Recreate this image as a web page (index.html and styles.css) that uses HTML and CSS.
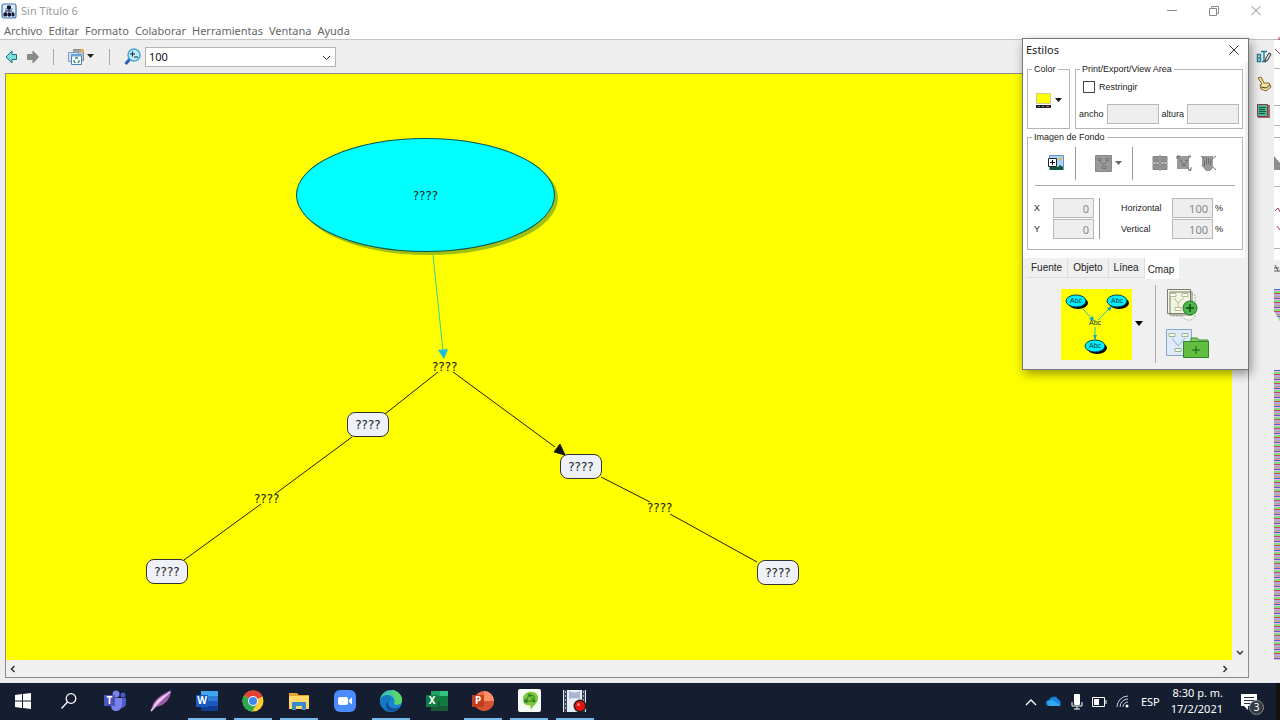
FILE: index.html
```html
<!DOCTYPE html>
<html lang="es">
<head>
    <meta charset="UTF-8">
    <meta name="viewport" content="width=device-width, initial-scale=1.0">
    <title>Sin Título 6</title>
    <link rel="stylesheet" href="styles.css">
</head>
<body>
  <div class="desktop">
    <div class="app">
      <header class="titlebar">
        <svg class="app-icon" width="16" height="16" viewBox="0 0 16 16">
          <rect x="1" y="1" width="14" height="14" rx="2" fill="#dfeaf6" stroke="#3b78b8" stroke-width="1.2"/>
          <path d="M6.500 3h3v3h-3zM3 10h2.500v3H3zM7 10h2.500v3H7zM11 10h2v3h-2zM8 6v3M5 9l-1 2M11 9l1 2M4 8h7" fill="#111a33" stroke="#111a33"/>
          <path d="M4 6h2M11 5v2M7 8h1" stroke="#5f94c9"/>
        </svg>
        <span class="title">Sin Título 6</span>
        <div class="window-buttons">
          <button aria-label="Minimizar"><svg width="12" height="12"><path d="M1 5.500h10"/></svg></button>
          <button aria-label="Restaurar"><svg width="12" height="12"><path d="M1.500 3.500h7v7h-7zM3.500 3v-1.500h7v7H9"/></svg></button>
          <button aria-label="Cerrar"><svg width="12" height="12"><path d="M1.500 1l9 9M10.500 1l-9 9"/></svg></button>
        </div>
      </header>

      <nav class="menu">
        <button>Archivo</button>
        <button>Editar</button>
        <button>Formato</button>
        <button>Colaborar</button>
        <button>Herramientas</button>
        <button>Ventana</button>
        <button>Ayuda</button>
      </nav>

      <div class="workspace">
        <main class="main">
          <div class="toolbar">
            <button aria-label="Atrás"><svg width="12" height="14" viewBox="0 0 12 14"><path d="M1 7l6-6v3.500h4.500v5H7V13z" fill="#7fe0dc" stroke="#1c6a88"/></svg></button>
            <button class="forward" aria-label="Adelante"><svg width="12" height="14" viewBox="0 0 12 14"><path d="M11.500 7L6 1v3.500H.5v5H6V13z" fill="#8d8d8d" stroke="#858585"/></svg></button>
            <span class="bar"></span>
            <button class="views" aria-label="Vistas">
              <svg width="18" height="18" viewBox="0 0 18 18">
                <path d="M6.500 1.500h10v11h-10z" fill="#c9c9c9" stroke="#8b8b8b"/><path d="M6.500 2h10v2.500h-10z" fill="#a5a5a5"/><path d="M14 1h3v3h-3z" fill="#f4b04d"/>
                <path d="M1.500 4.500h10v9h-10z" fill="#d6e2f0" stroke="#7f9dc0"/>
                <path d="M4.500 6.500h10v10h-10z" fill="#fff" stroke="#4a80c4"/><path d="M4 6h11v2.500H4z" fill="#6aa0dd"/>
                <path d="M8 10.500l1.500-1 1.500 1M7 12l0 2 1.500 1M12 12v2l-1.500 1" stroke="#23806a" fill="none" stroke-width="1.200"/>
              </svg>
              <svg width="8" height="5"><path d="M0 0h7L3.500 4z" fill="#222"/></svg>
            </button>
            <span class="bar"></span>
            <label class="zoom-icon" for="zoom" aria-label="Zoom">
              <svg width="18" height="18" viewBox="0 0 18 18">
                <path d="M6 11l-4.500 5" stroke="#2f5bb0" stroke-width="3"/>
                <circle cx="10" cy="7" r="6" fill="#b8ecf7" stroke="#4aa3d5" stroke-width="1.500"/>
                <path d="M8.500 3.500v5M6 6h5M10 9h4" stroke="#124" fill="none"/>
              </svg>
            </label>
            <div class="zoom-select">
              <select id="zoom"><option>100</option><option>75</option><option>50</option></select>
              <svg width="9" height="6"><path d="M1 1l3.500 3.500L8 1" fill="none" stroke="#333"/></svg>
            </div>
          </div>

          <div class="frame">
            <div class="map">
              <svg class="links" width="900" height="560">
                <path d="M427 181l10 96" class="cyan"/>
                <path d="M432 276l10-1-4 10z" fill="#17c0e0"/>
                <path d="M432 298L379 340M346 363L269 420M255 430L178 486M447 298L549 373M595 403L644 428M664 440L751 488"/>
                <path d="M559 381l-11-3 6-8z" class="head"/>
              </svg>
              <div class="ellipse">????</div>
              <div class="node n1">????</div>
              <div class="node n2">????</div>
              <div class="node n3">????</div>
              <div class="node n4">????</div>
              <span class="phrase p1">????</span>
              <span class="phrase p2">????</span>
              <span class="phrase p3">????</span>
            </div>
            <div class="scroll-v"><svg width="8" height="6"><path d="M1 1l3 3 3-3"/></svg></div>
            <div class="scroll-h">
              <svg width="6" height="8"><path d="M4.500 1l-3 3 3 3"/></svg>
              <svg width="6" height="8"><path d="M1.500 1l3 3-3 3"/></svg>
            </div>
          </div>
        </main>

        <aside class="side">
          <button aria-label="Texto">
            <svg width="16" height="14" viewBox="0 0 16 14"><path d="M1.500 4.500h3v7h-3zM1 8h4M5 1.500h6M8 2v9M6 11.500h4" fill="none" stroke="#1f8292" stroke-width="1.500"/><path d="M9 12l1-4 3-5 2 1-3 6z" fill="#ddd" stroke="#333"/></svg>
          </button>
          <button aria-label="Estilo">
            <svg width="16" height="16" viewBox="0 0 16 16"><path d="M2 2l3-1 3 6 5 0 2 4-5 4-5-2-1-4 2-1z" fill="#f4e1a0" stroke="#876326"/><path d="M5 11l5 1 4-3" fill="none" stroke="#443"/></svg>
          </button>
          <button aria-label="Notas">
            <svg width="15" height="15" viewBox="0 0 15 15"><path d="M2 1h12v13H2z" fill="#9a6a70"/><path d="M1.500.5h10v12h-10z" fill="#4fb890" stroke="#823d4c"/><path d="M3 3.500h7M3 5.500h6M3 7.500h7M3 9.500h6" stroke="#12543f"/></svg>
          </button>
        </aside>
      </div>
    </div>

    <!-- edge of the window behind -->
    <div class="behind">
      <div class="behind-top">
        <svg width="6" height="260">
          <path d="M0 39.500h6M0 68.500h6M0 105.500h6M0 125.500h6M0 137.500h6M0 186.500h6M0 248.500h6" stroke="#b5b5b5"/>
          <path d="M1 49l5 5M1 211l3-3 2 4M3 226l3 4M5 37v3" stroke="#a33c55" fill="none"/>
          <path d="M0 156l6 7v7H0z" fill="#8d8d8d"/>
        </svg>
      </div>
      <div class="behind-tab"><svg width="6" height="16"><path d="M0 8h5M1 5l3 6M0 11h6" stroke="#555"/></svg></div>
      <div class="stripes short"></div>
      <div class="stripes"></div>
    </div>

    <section class="palette">
      <div class="palette-title">
        <span>Estilos</span>
        <button aria-label="Cerrar"><svg width="10" height="10"><path d="M.5.5l9 9M9.500.5l-9 9"/></svg></button>
      </div>
      <div class="panel">
        <div class="group-row">
          <fieldset class="color">
            <legend>Color</legend>
            <button aria-label="Color de fondo">
              <svg width="17" height="17"><path d="M1.500 1.500h14v10h-14z" fill="#ff0" stroke="#c8c8a0"/><path d="M1 13h15v3H1z" fill="#222"/><path d="M3 14.500h2" stroke="#57c"/><path d="M7 14.500h2" stroke="#3a6"/><path d="M11 14.500h3" stroke="#c55"/></svg>
              <svg width="7" height="5"><path d="M0 0h7L3.500 4z" fill="#111"/></svg>
            </button>
          </fieldset>
          <fieldset class="area">
            <legend>Print/Export/View Area</legend>
            <label class="check"><input type="checkbox">Restringir</label>
            <div class="sizes">
              <label for="ancho">ancho</label><input id="ancho" type="text" disabled>
              <label for="altura">altura</label><input id="altura" type="text" disabled>
            </div>
          </fieldset>
        </div>
        <fieldset class="image">
          <legend>Imagen de Fondo</legend>
          <div class="tools">
            <button aria-label="Agregar imagen">
              <svg width="18" height="16"><path d="M2.500.5h14v14h-14z" fill="#a9d4f5" stroke="#6a93c4"/><path d="M3 12h8l2-2 3 2v3H3z" fill="#0d5a3f"/><circle cx="13" cy="4" r="1.500" fill="#f3b92f"/><path d="M1.500 3.500h8v8h-8z" fill="#fff" stroke="#1c2733"/><path d="M5.500 5v5M3 7.500h5" stroke="#111"/></svg>
            </button>
            <span class="bar"></span>
            <button class="styles" aria-label="Posición" disabled>
              <svg width="17" height="17"><path d="M.5.5h16v16H.5z" fill="#999" stroke="#888"/><path d="M3 3.500h3v2H3zM11 3.500h3v2h-3zM7 11.500h4v2H7zM5 6l3.500 4L12 6" fill="none" stroke="#777"/></svg>
              <svg width="7" height="5"><path d="M0 0h7L3.500 4z" fill="#666"/></svg>
            </button>
            <span class="bar"></span>
            <button aria-label="Centrar" disabled>
              <svg width="16" height="16"><path d="M1 1.500h6v5H1zM9 1.500h6v5H9zM1 9.500h6v5H1zM9 9.500h6v5H9z" fill="#909090" stroke="#858585"/><path d="M8 0v16M0 8h16" stroke="#666"/></svg>
            </button>
            <button aria-label="Ajustar" disabled>
              <svg width="16" height="16"><path d="M1 1h12v13H1z" fill="#999"/><path d="M1 1l3 3M15 1l-3 3M11 12l4 4M1 4V1h3M12 1h3M15 12v3h-3M4 5.500h2M9 5.500h3M6 10.500h4M5 7l3 3 3-3" fill="none" stroke="#707070"/></svg>
            </button>
            <button aria-label="Mover" disabled>
              <svg width="17" height="16"><path d="M2 1h11v12l-3 3H6l-5-6h1z" fill="#999"/><path d="M4.500 11V5M6.500 9V3M8.500 9V3M10.500 10V4M12 4l4-3M13 12l3 3M1 1l3 3" fill="none" stroke="#707070"/></svg>
            </button>
          </div>
          <hr>
          <div class="position">
            <div class="xy">
              <label for="x">X</label><input id="x" type="text" value="0" disabled>
              <label for="y">Y</label><input id="y" type="text" value="0" disabled>
            </div>
            <div class="scale">
              <label for="hor">Horizontal</label><input id="hor" type="text" value="100" disabled><span>%</span>
              <label for="ver">Vertical</label><input id="ver" type="text" value="100" disabled><span>%</span>
            </div>
          </div>
        </fieldset>
      </div>
      <div class="tabs">
        <button>Fuente</button><button>Objeto</button><button>Línea</button><button class="active">Cmap</button>
      </div>
      <div class="presets">
        <button class="preview" aria-label="Estilo de Cmap">
          <svg width="71" height="71" viewBox="0 0 71 71">
            <path d="M0 0h71v71H0z" fill="#ff0"/>
            <path d="M22 20l10 11M37 31l12-12M34 38v12" stroke="#24bfae"/>
            <path d="M33 32l-5-2 4-3zM51 17l-5 2 3 3zM34 51l-2-5h4z" fill="#14a9bd"/>
            <g fill="#000"><ellipse cx="17" cy="14" rx="10" ry="6"/><ellipse cx="58" cy="14" rx="10" ry="6"/><ellipse cx="36" cy="59" rx="10" ry="6"/></g>
            <g fill="#00efff" stroke="#045"><ellipse cx="15" cy="12" rx="10" ry="6"/><ellipse cx="56" cy="12" rx="10" ry="6"/><ellipse cx="34" cy="57" rx="10" ry="6"/></g>
            <g class="abc"><text x="15" y="14">Abc</text><text x="56" y="14">Abc</text><text x="34" y="36">Abc</text><text x="34" y="59">Abc</text></g>
          </svg>
        </button>
        <svg class="caret" width="8" height="6"><path d="M0 0h8L4 5z"/></svg>
        <div class="actions">
          <button aria-label="Agregar estilo">
            <svg width="34" height="34" viewBox="0 0 34 34">
              <path d="M7 7h22v22q-4 5-10 2l-4-3H7z" fill="#f7f7ec" stroke="#aaa" stroke-dasharray="2 1"/>
              <path d="M4 4h22v23H4zM1.500 1.500h23v24h-23z" fill="#f2f5df" stroke="#7b7b72"/>
              <path d="M4 5.500h6v3H4zM16 5.500h6v3h-6zM9 19.500h6v3H9z" fill="#fff" stroke="#b9b98e"/><path d="M8 10l4 5v4M12 15l6-5" fill="none" stroke="#b9b98e"/>
              <circle cx="24" cy="20" r="7" fill="#4cb848" stroke="#26752b"/><path d="M24 16v8M20 20h8" stroke="#124d18" stroke-width="1.500"/>
            </svg>
          </button>
          <button aria-label="Agregar carpeta">
            <svg width="44" height="32" viewBox="0 0 44 32">
              <path d="M.5.5h25v26H.5z" fill="#dfebf8" stroke="#84a6c9"/>
              <path d="M3 4.500h6v3H3zM16 4.500h6v3h-6zM9 19.500h6v3H9z" fill="#fffde0" stroke="#9ab0a0"/><path d="M6 9l6 8 7-8" fill="none" stroke="#90afd8"/>
              <path d="M25 12V9h6l2 2h9v4" fill="#7fcf62" stroke="#3c8d2d"/><path d="M17.500 12.500h25v16h-25z" fill="#62bd40" stroke="#2f862b"/><path d="M30 17v8M26 21h8" stroke="#145c20"/>
            </svg>
          </button>
        </div>
      </div>
    </section>
  </div>

  <footer class="taskbar">
    <div class="apps">
      <button aria-label="Inicio"><svg width="16" height="16"><path d="M0 2l7-1v6.500H0zM8 1l8-1v7.500H8zM0 8.500h7V15l-7-1zM8 8.500h8V16l-8-1z" fill="#fff"/></svg></button>
      <button aria-label="Buscar"><svg width="16" height="16"><circle cx="10" cy="5.500" r="4.800" fill="none" stroke="#fff" stroke-width="1.300"/><path d="M6.500 9L.5 15.500" stroke="#fff" stroke-width="1.300"/></svg></button>
      <button aria-label="Teams"><svg width="24" height="22"><circle cx="20" cy="5" r="2.500" fill="#5059c9"/><path d="M16 8h7v6q-1 4-5 4z" fill="#5059c9"/><circle cx="13" cy="4" r="3.500" fill="#7b83eb"/><path d="M8 8h11v7q-1 6-6 6t-5-6z" fill="#7b83eb"/><path d="M1 5h11v11H1z" fill="#4b53bc"/><text x="6.500" y="14">T</text></svg></button>
      <button aria-label="Pluma"><svg width="22" height="22"><path d="M1 21C2 11 10 5 21 0c0 8-5 15-15 17l-4 4z" fill="#9a5cab"/><path d="M1 21C8 12 13 8 20 2M4 16Q8 9 16 5" stroke="#ecc5f3" fill="none" stroke-width="1.500"/></svg></button>
      <button class="open" aria-label="Word"><svg width="24" height="22"><path d="M6 1h17v5H6z" fill="#41a5ee"/><path d="M6 6h17v5H6z" fill="#2b7cd3"/><path d="M6 11h17v5H6z" fill="#185abd"/><path d="M6 16h17v5H6z" fill="#103f91"/><path d="M1 5h12v12H1z" fill="#185abd"/><text x="7" y="14">W</text></svg></button>
      <button class="open" aria-label="Chrome"><svg width="22" height="22"><circle cx="11" cy="11" r="10.500" fill="#fc3"/><path d="M11 11L2 5.500A10.500 10.500 0 0 1 20.500 6.500z" fill="#e34133"/><path d="M11 11L2 5.500A10.500 10.500 0 0 0 10 21.500l4.500-7z" fill="#2da94f"/><circle cx="11" cy="11" r="5" fill="#fff"/><circle cx="11" cy="11" r="4" fill="#4285f4"/></svg></button>
      <button class="open" aria-label="Explorador"><svg width="22" height="20"><path d="M1 2h8l2 2h10v13H1z" fill="#e3a52b"/><path d="M1 5h20v13H1z" fill="#ffd968"/><path d="M4 11h14v8h-4v-4H8v4H4z" fill="#3c8bc9"/></svg></button>
      <button aria-label="Zoom"><svg width="22" height="22"><rect width="22" height="22" rx="6" fill="#4a8cff"/><rect x="4" y="7" width="10" height="8" rx="2" fill="#fff"/><path d="M15 10l3-2.500v7L15 12z" fill="#fff"/></svg></button>
      <button class="open" aria-label="Edge"><svg width="24" height="24"><circle cx="12" cy="12" r="11" fill="#1b83d0"/><path d="M1 11C3-2 22-2 23 11c0 4-4 6-8 4 2-4-1-7-5-7-4 0-7 1-9 3z" fill="#42c6a6"/><path d="M13 1c7 1 11 7 10 11-1 4-5 4-8 3 3-4 1-8-1-9z" fill="#5cd66b"/><path d="M1 11c2-6 12-7 14 0-5-3-9 5-2 11C4 22 1 17 1 11z" fill="#1479c5"/><path d="M9 13c0 6 6 8 12 5-4 6-14 6-14-1 0-3 1-5 4-6z" fill="#104f99"/></svg></button>
      <button aria-label="Excel"><svg width="24" height="22"><path d="M6 1h9v5H6z" fill="#21a366"/><path d="M15 1h8v5h-8z" fill="#33c481"/><path d="M6 6h17v5H6z" fill="#107c41"/><path d="M6 11h17v10H6z" fill="#185c37"/><path d="M15 11h8v5h-8z" fill="#107c41"/><path d="M1 5h12v12H1z" fill="#107c41"/><text x="7" y="14">X</text></svg></button>
      <button class="open" aria-label="PowerPoint"><svg width="24" height="22"><circle cx="13" cy="11" r="10" fill="#ed6c47"/><path d="M13 1a10 10 0 0 1 10 10H13z" fill="#ff8f6b"/><path d="M3 11h20a10 10 0 0 1-20 0z" fill="#d35230"/><path d="M1 5h12v12H1z" fill="#c43e1c"/><text x="7" y="14">P</text></svg></button>
      <button class="open" aria-label="CmapTools"><svg width="23" height="23"><rect width="23" height="23" rx="2" fill="#f6faf4"/><path d="M5 10C5 1 20 0 20 9c0 6-5 7-7 12l-1-5c-4 1-7-1-7-6z" fill="#7cc937"/><path d="M8 12l3-6 5 1v5l-8 0M11 6l5 6" fill="none" stroke="#2b7a28"/><circle cx="8" cy="12" r="2" fill="#2f8130"/><circle cx="11.500" cy="6" r="1.500" fill="#2f8130"/><circle cx="16" cy="12" r="1.500" fill="#2f8130"/></svg></button>
      <button class="open" aria-label="Grabador"><svg width="24" height="24"><path d="M0 1h23v22H0z" fill="#e9edf6"/><path d="M1 1h3v22H1zM19 1h3v22h-3z" fill="#39445f"/><path d="M2.500 2v20M20.500 2v20" stroke="#aab4d0" stroke-dasharray="2 2"/><path d="M6 2q5 3 11 0v8q-5-2-11 0z" fill="#aab5d6"/><circle cx="17" cy="17" r="6.500" fill="#222"/><circle cx="17" cy="17" r="5" fill="#e81212"/><circle cx="15.500" cy="15.500" r="1.500" fill="#ff8a7a"/></svg></button>
    </div>
    <div class="tray">
      <svg width="12" height="8"><path d="M1 7l5-5 5 5" fill="none" stroke="#fff" stroke-width="1.300"/></svg>
      <svg width="16" height="11"><path d="M3 10a3 3 0 0 1 0-6 5 5 0 0 1 9-1 4 4 0 0 1 1 7z" fill="#1683dc"/><path d="M1 6l5-2 9 5-2 1H3z" fill="#32a8ef"/></svg>
      <svg width="12" height="16"><rect x="3" width="6" height="11" rx="1" fill="#fff"/><path d="M1 8v4h10V8M6 12v3M3 15h6" stroke="#fff" fill="none"/></svg>
      <svg width="15" height="10"><path d="M.5.5h12v9H.5zM14 3v4" fill="none" stroke="#fff"/><path d="M2 2h5v6H2z" fill="#fff"/></svg>
      <svg width="13" height="13"><path d="M1 12A11 11 0 0 1 12 1M4 12a8 8 0 0 1 8-8M7 12a5 5 0 0 1 5-5" fill="none" stroke="#ccd"/><circle cx="11" cy="11" r="1.500" fill="#fff"/></svg>
      <span class="lang">ESP</span>
      <div class="clock"><span>8:30 p. m.</span><span>17/2/2021</span></div>
      <button class="notices" aria-label="Notificaciones">
        <svg width="16" height="16"><path d="M0 0h16v12h-9v4l-4-4H0z" fill="#fff"/><path d="M3 3.500h10M3 6.500h10M3 9.500h6" stroke="#2a3040"/></svg>
        <span class="count">3</span>
      </button>
    </div>
  </footer>
</body>
</html>
```
FILE: styles.css
```css
* {
box-sizing: border-box;
}

body {
margin: 0;
min-height: 100vh;
display: flex;
flex-direction: column;
background: #eeeeee;
color: #222;
font-family: "Noto Sans", sans-serif;
font-size: 11px;
line-height: 16px;
}

button {
display: flex;
align-items: center;
justify-content: center;
padding: 0;
border: 0;
background: none;
color: inherit;
font: inherit;
}

svg {
display: block;
flex: none;
}

.desktop {
position: relative;
display: flex;
flex: 1;
border-bottom: 1px solid #dfe8f5;
}

.app {
display: flex;
flex-direction: column;
flex: 1;
}

.titlebar {
display: flex;
align-items: center;
height: 22px;
padding: 0 12px 0 1px;
background: #fff;
color: #999;
}

.title {
margin-left: 4px;
}

.window-buttons {
display: flex;
gap: 30px;
margin-left: auto;
}

.window-buttons svg {
fill: none;
stroke: #888;
}

.menu {
display: flex;
gap: 6px;
height: 18px;
padding-left: 4px;
background: #fff;
border-bottom: 1px solid #c4c4c4;
color: #666;
}

.workspace {
display: flex;
flex: 1;
}

.main {
display: flex;
flex-direction: column;
flex: 1;
padding: 0 0 4px 5px;
}

.toolbar {
display: flex;
align-items: center;
height: 33px;
}

.forward {
margin-left: 10px;
}

.bar {
width: 1px;
height: 16px;
background: #aaa;
}

.toolbar .bar {
margin: 0 14px;
}

.toolbar .views {
gap: 2px;
margin-left: -1px;
}

.zoom-select {
position: relative;
width: 191px;
margin-left: 3px;
}

.zoom-select select {
display: block;
width: 100%;
height: 20px;
padding: 0 3px;
appearance: none;
background: #fff;
border: 1px solid #b4b4b4;
border-radius: 0;
color: #111;
font: inherit;
}

.zoom-select svg {
position: absolute;
top: 8px;
right: 5px;
}

.frame {
display: grid;
grid-template-columns: 1fr 16px;
grid-template-rows: 1fr 17px;
flex: 1;
border: 1px solid #8c8c8c;
}

.map {
position: relative;
background: #ffff00;
font-family: "DejaVu Sans", sans-serif;
font-size: 12px;
}

.links {
position: absolute;
top: 0;
left: 0;
stroke: #222200;
fill: none;
}

.links .cyan {
stroke: #3ccf96;
}

.links path[fill] {
stroke: none;
}

.links .head {
fill: #111;
}

.ellipse {
position: absolute;
left: 290px;
top: 64px;
width: 259px;
height: 114px;
border: 1px solid #075555;
border-radius: 50%;
background: #00ffff;
box-shadow: 3px 3px 0 #a0c010;
line-height: 114px;
text-align: center;
}

.node {
position: absolute;
width: 42px;
height: 25px;
border: 1px solid #333;
border-radius: 8px;
background: #eef1f8;
line-height: 24px;
text-align: center;
}

.n1 {
left: 341px;
top: 338px;
}

.n2 {
left: 554px;
top: 380px;
}

.n3 {
left: 140px;
top: 485px;
}

.n4 {
left: 751px;
top: 486px;
}

.phrase {
position: absolute;
}

.p1 {
left: 426px;
top: 285px;
}

.p2 {
left: 248px;
top: 417px;
}

.p3 {
left: 641px;
top: 426px;
}

.scroll-v {
display: flex;
align-items: flex-end;
justify-content: center;
padding-bottom: 4px;
background: #f0f0f0;
}

.scroll-h {
display: flex;
grid-column: 1 / 3;
align-items: center;
justify-content: space-between;
padding: 0 20px 0 4px;
background: #f0f0f0;
}

.scroll-v svg,
.scroll-h svg {
fill: none;
stroke: #333;
stroke-width: 1.5;
}

.side {
display: flex;
flex-direction: column;
align-items: center;
gap: 12px;
width: 25px;
padding: 10px 0 0 4px;
}

/* window behind, right edge */
.behind {
width: 6px;
height: 660px;
}

.behind-top {
height: 260px;
overflow: hidden;
background: #fff;
}

.behind-tab {
height: 29px;
}

.stripes {
height: 290px;
background: repeating-linear-gradient(#5060d0 0 1px, #e8b8dd 1px 2px, #80dc80 2px 4px, #c74b58 4px 5px, #b9a4dc 5px 7px, #a0b090 7px 8px, #dd9aad 8px 9px);
}

.short {
height: 32px;
margin-bottom: 49px;
clip-path: polygon(0 0, 100% 0, 100% 100%, 0 70%);
}

/* styles palette */
.palette {
position: absolute;
top: 38px;
right: 31px;
width: 227px;
background: #f0f0f0;
border: 1px solid #777;
box-shadow: 2px 4px 10px rgba(0, 0, 0, 0.4);
font-family: "Liberation Sans", Arial, sans-serif;
font-size: 9px;
line-height: 10px;
}

.palette-title {
display: flex;
align-items: center;
justify-content: space-between;
height: 23px;
padding: 0 9px 2px 3px;
background: #fff;
font-family: "Noto Sans", sans-serif;
font-size: 11px;
}

.palette-title svg {
fill: none;
stroke: #333;
}

.panel {
margin-right: 3px;
padding: 2px 2px 8px 4px;
background: #fff;
}

.group-row {
display: flex;
gap: 5px;
}

fieldset {
margin: 0;
padding: 0;
min-width: 0;
border: 1px solid #b5b5b5;
}

legend {
margin-left: 4px;
padding: 0 2px;
}

.color {
width: 43px;
height: 65px;
}

.color button {
gap: 3px;
margin: 18px 0 0 7px;
}

.area {
flex: 1;
height: 65px;
}

.check {
display: flex;
align-items: center;
gap: 4px;
margin: 7px 0 0 7px;
}

.check input {
width: 12px;
height: 12px;
margin: 0;
appearance: none;
border: 1px solid #444;
background: #fff;
}

.panel input[type="text"] {
min-width: 0;
width: 100%;
height: 20px;
padding: 0 4px;
border: 1px solid #b8b8b8;
background: #eeeeee;
color: #888;
font-family: "Noto Sans", sans-serif;
font-size: 11px;
text-align: right;
}

.sizes {
display: grid;
grid-template-columns: auto 1fr auto 1fr;
align-items: center;
column-gap: 3px;
margin: 11px 3px 0;
}

.image {
height: 118px;
margin-top: 3px;
}

.tools {
display: flex;
align-items: center;
height: 42px;
padding: 0 19px;
gap: 8px;
}

.tools .bar {
height: 33px;
background: #999;
margin: 0 11px 0 2px;
}

hr {
height: 1px;
margin: 1px 7px 12px;
border: 0;
background: #aaa;
}

.tools .styles {
gap: 3px;
}

.position {
display: flex;
align-items: center;
padding-left: 6px;
}

.xy,
.scale {
display: grid;
align-items: center;
row-gap: 1px;
}

.xy {
grid-template-columns: 19px 41px;
padding-right: 5px;
border-right: 1px solid #999;
}

.scale {
grid-template-columns: 49px 41px 10px;
column-gap: 2px;
margin-left: 21px;
}

.tabs {
display: flex;
height: 21px;
padding-left: 3px;
font-size: 10px;
}

.tabs button {
height: 20px;
padding: 0 5px;
border-right: 1px solid #ddd;
border-bottom: 1px solid #ddd;
}

.tabs .active {
height: 21px;
padding: 2px 5px 0 3px;
border: 0;
background: #fff;
}

.presets {
display: flex;
align-items: center;
height: 90px;
padding-left: 38px;
}

.preview .abc {
font-size: 7px;
text-anchor: middle;
fill: #063a44;
}

.caret {
margin: 0 12px 0 3px;
}

.actions {
display: flex;
flex-direction: column;
align-items: flex-start;
gap: 7px;
padding: 3px 0 2px 10px;
border-left: 1px solid #aaa;
}

/* taskbar */
.taskbar {
display: flex;
justify-content: space-between;
height: 37px;
background: #151d30;
border-right: 4px solid #111;
color: #fff;
}

.apps {
display: flex;
}

.apps button {
width: 46px;
border-bottom: 2px solid transparent;
}

.apps .open {
background: linear-gradient(#76b9ed, #76b9ed) center bottom / 38px 2px no-repeat border-box;
}

.apps text {
fill: #fff;
font-size: 10px;
font-weight: bold;
text-anchor: middle;
}

.tray {
display: flex;
align-items: center;
gap: 9px;
padding-right: 12px;
}

.lang {
margin-left: 3px;
}

.clock {
display: flex;
flex-direction: column;
align-items: flex-end;
margin-left: 2px;
padding-bottom: 1px;
}

.notices {
position: relative;
margin-left: 9px;
padding-right: 7px;
}

.count {
position: absolute;
top: 6px;
right: 0;
width: 15px;
height: 15px;
border: 1px solid #888;
border-radius: 50%;
background: #333a48;
font-size: 10px;
line-height: 13px;
}
```
